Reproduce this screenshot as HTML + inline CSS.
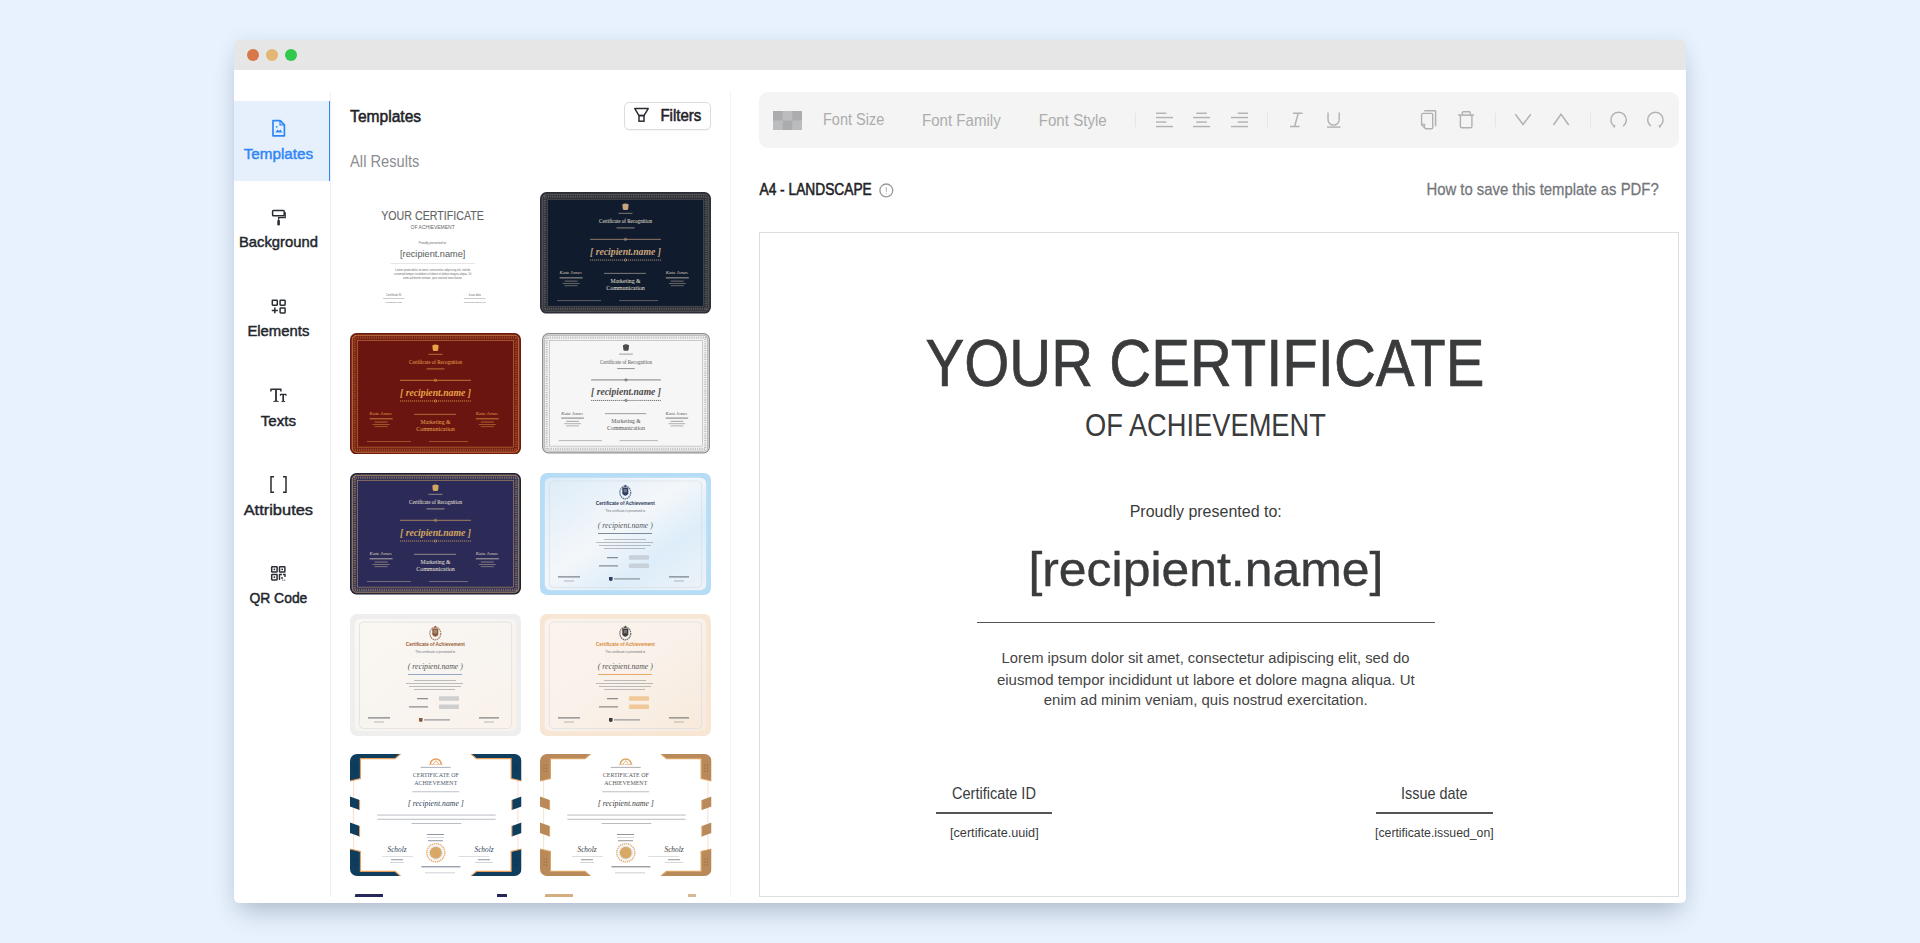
<!DOCTYPE html>
<html><head><meta charset="utf-8">
<style>
*{box-sizing:border-box;margin:0;padding:0}
html,body{width:1920px;height:943px;overflow:hidden;background:#e8f2fe;font-family:"Liberation Sans",sans-serif}
.abs{position:absolute}
#win{position:absolute;left:234px;top:40px;width:1452px;height:863px;border-radius:5px;background:#fff;overflow:hidden;box-shadow:0 14px 24px -6px rgba(70,80,105,0.32),0 0 18px rgba(80,100,130,0.08)}
#tb{position:absolute;left:0;top:0;width:100%;height:30px;background:#e6e6e6}
.dot{position:absolute;top:9.4px;width:12px;height:12px;border-radius:50%}
.t{position:absolute;white-space:nowrap;line-height:1}
#L{position:absolute;left:0;top:0;width:1920px;height:943px}
</style></head><body>
<div id="win">
  <div id="tb">
    <div class="dot" style="left:13px;background:#d6784a"></div>
    <div class="dot" style="left:32px;background:#e3b673"></div>
    <div class="dot" style="left:51px;background:#30c94b"></div>
  </div>
</div>
<div id="L">
<div class="abs" style="left:234px;top:101px;width:96px;height:80px;background:#e6f0fc;"></div>
<div class="abs" style="left:328.8px;top:101px;width:2.5px;height:80px;background:#2f86f6;"></div>
<div class="abs" style="left:330px;top:92px;width:1px;height:805px;background:#efefef;"></div>
<div class="abs" style="left:730px;top:92px;width:1px;height:805px;background:#f3f3f3;"></div>
<div class="t" style="left:243.65px;top:145.69px;font-size:15.25px;color:#2f86f6;transform:scaleY(1.010);transform-origin:0 12.91px;-webkit-text-stroke:0.45px #2f86f6;">Templates</div>
<div class="t" style="left:238.90px;top:235.27px;font-size:14.80px;color:#23262c;transform:scaleY(1.041);transform-origin:0 12.53px;-webkit-text-stroke:0.45px #23262c;">Background</div>
<div class="t" style="left:247.40px;top:324.01px;font-size:14.87px;color:#23262c;transform:scaleY(1.036);transform-origin:0 12.59px;-webkit-text-stroke:0.45px #23262c;">Elements</div>
<div class="t" style="left:260.75px;top:412.99px;font-size:15.12px;color:#23262c;transform:scaleY(1.019);transform-origin:0 12.81px;-webkit-text-stroke:0.45px #23262c;">Texts</div>
<div class="t" style="left:243.65px;top:500.77px;font-size:16.45px;color:#23262c;transform:scaleY(0.936);transform-origin:0 13.93px;-webkit-text-stroke:0.45px #23262c;">Attributes</div>
<div class="t" style="left:249.40px;top:591.82px;font-size:13.91px;color:#23262c;transform:scaleY(1.107);transform-origin:0 11.78px;-webkit-text-stroke:0.45px #23262c;">QR Code</div>
<svg class="abs" style="left:270px;top:118px" width="17" height="20" viewBox="0 0 17 20">
<path d="M3 2.6 H10.2 L14.4 6.8 V17.8 H3 Z" fill="none" stroke="#2f86f6" stroke-width="1.7" stroke-linejoin="round"/>
<path d="M10 2.6 V6.9 H14.4" fill="none" stroke="#2f86f6" stroke-width="1.2"/>
<path d="M5.2 14.6 L7.6 11.6 L9 13 L10.4 11.6 L12.4 14.6 Z" fill="#2f86f6"/>
<circle cx="6.8" cy="8.8" r="0.9" fill="#2f86f6"/>
</svg><svg class="abs" style="left:270px;top:208px" width="17" height="20" viewBox="0 0 17 20">
<rect x="2.6" y="2.5" width="11.6" height="5.2" rx="0.8" fill="none" stroke="#2a2d33" stroke-width="1.5"/>
<path d="M14.2 4.8 H15.2 V9.6 H8.6 V11.8" fill="none" stroke="#2a2d33" stroke-width="1.3"/>
<rect x="7.3" y="11.8" width="2.6" height="5.6" rx="1.2" fill="#2a2d33"/>
</svg><svg class="abs" style="left:270px;top:297px" width="17" height="19" viewBox="0 0 17 19">
<rect x="2.3" y="3.2" width="5" height="5" rx="0.6" fill="none" stroke="#2a2d33" stroke-width="1.5"/>
<rect x="10.1" y="3.2" width="5" height="5" rx="0.6" fill="none" stroke="#2a2d33" stroke-width="1.5"/>
<rect x="10.1" y="10.9" width="5" height="5" rx="0.6" fill="none" stroke="#2a2d33" stroke-width="1.5"/>
<path d="M4.8 10.4 V16.3 M1.8 13.4 H7.8" stroke="#2a2d33" stroke-width="1.5"/>
</svg><svg class="abs" style="left:266px;top:384px" width="26" height="22" viewBox="0 0 26 22">
<path d="M4.9 7.5 V5.2 H14.9 V7.5" fill="none" stroke="#2a2d33" stroke-width="1.5" stroke-linejoin="round"/>
<path d="M10 5 V17.6" stroke="#2a2d33" stroke-width="1.8"/>
<path d="M7.5 17.7 Q10 16.4 12.5 17.7" fill="none" stroke="#2a2d33" stroke-width="1.1"/>
<path d="M14.5 11.8 V10.4 H19.9 V11.8" fill="none" stroke="#2a2d33" stroke-width="1.3" stroke-linejoin="round"/>
<path d="M17.2 10.3 V17.6" stroke="#2a2d33" stroke-width="1.7"/>
<path d="M15.4 17.7 Q17.2 16.6 19 17.7" fill="none" stroke="#2a2d33" stroke-width="1"/>
</svg><svg class="abs" style="left:269px;top:475px" width="19" height="19" viewBox="0 0 19 19">
<path d="M5 1.8 H2 V17.2 H5 M14 1.8 H17 V17.2 H14" fill="none" stroke="#2a2d33" stroke-width="1.5"/>
</svg><svg class="abs" style="left:270px;top:565px" width="17" height="17" viewBox="0 0 17 17">
<rect x="1.7" y="1.7" width="5.4" height="5.4" rx="0.6" fill="none" stroke="#2a2d33" stroke-width="1.5"/>
<rect x="9.5" y="1.7" width="5.4" height="5.4" rx="0.6" fill="none" stroke="#2a2d33" stroke-width="1.5"/>
<rect x="1.7" y="9.5" width="5.4" height="5.4" rx="0.6" fill="none" stroke="#2a2d33" stroke-width="1.5"/>
<rect x="3.6" y="3.6" width="1.6" height="1.6" fill="#2a2d33"/><rect x="11.4" y="3.6" width="1.6" height="1.6" fill="#2a2d33"/><rect x="3.6" y="11.4" width="1.6" height="1.6" fill="#2a2d33"/>
<path d="M9.5 15 V9.5 H12 M13 9.5 H15 V12 M12 12 V14" fill="none" stroke="#2a2d33" stroke-width="1.4"/>
<rect x="12.3" y="14.6" width="1" height="1" fill="#2a2d33"/><rect x="14.2" y="14.6" width="1" height="1" fill="#2a2d33"/>
</svg><div class="t" style="left:350.10px;top:109.21px;font-size:15.58px;color:#1f2227;transform:scaleY(1.064);transform-origin:0 13.19px;-webkit-text-stroke:0.5px #1f2227;">Templates</div>
<div class="t" style="left:350.10px;top:154.58px;font-size:14.67px;color:#8b8d91;transform:scaleY(1.110);transform-origin:0 12.42px;">All Results</div>
<div class="abs" style="left:624px;top:102px;width:87px;height:28px;border:1.5px solid #dcdcdc;border-radius:5px;background:#fff;box-shadow:0 1px 1px rgba(0,0,0,0.04)"></div>
<svg class="abs" style="left:633px;top:107px" width="17" height="16" viewBox="0 0 17 16">
<path d="M1.8 1.6 H15.2 L11 8.6 H6 Z" fill="none" stroke="#2a2d33" stroke-width="1.5" stroke-linejoin="round"/>
<rect x="6" y="8.6" width="5" height="5.6" fill="none" stroke="#2a2d33" stroke-width="1.5"/>
</svg><div class="t" style="left:660.40px;top:107.95px;font-size:15.06px;color:#1f2227;transform:scaleY(1.100);transform-origin:0 12.75px;-webkit-text-stroke:0.5px #1f2227;">Filters</div>
<div class="abs" style="left:759px;top:92px;width:920px;height:56px;border-radius:9px;background:#f4f4f4"></div>
<svg class="abs" style="left:773px;top:111px" width="29" height="19" viewBox="0 0 29 19">
<rect width="29" height="19" fill="#bbbcbe"/>
<rect x="0" y="0" width="9.7" height="9.5" fill="#acacae"/><rect x="19.3" y="0" width="9.7" height="9.5" fill="#acacae"/><rect x="9.7" y="9.5" width="9.6" height="9.5" fill="#acacae"/>
</svg><div class="t" style="left:823.00px;top:113.47px;font-size:14.50px;color:#acacac;transform:scaleY(1.163);transform-origin:0 12.28px;">Font Size</div>
<div class="t" style="left:922.00px;top:112.98px;font-size:15.08px;color:#acacac;transform:scaleY(1.118);transform-origin:0 12.77px;">Font Family</div>
<div class="t" style="left:1038.75px;top:112.96px;font-size:15.10px;color:#acacac;transform:scaleY(1.116);transform-origin:0 12.79px;">Font Style</div>
<div class="abs" style="left:1135px;top:112.5px;width:1px;height:14px;background:#e6e6e6;"></div>
<div class="abs" style="left:1267px;top:112.5px;width:1px;height:14px;background:#e6e6e6;"></div>
<div class="abs" style="left:1494.5px;top:112.5px;width:1px;height:14px;background:#e6e6e6;"></div>
<div class="abs" style="left:1589.5px;top:112.5px;width:1px;height:14px;background:#e6e6e6;"></div>
<svg class="abs" style="left:1155px;top:108px" width="20" height="24" viewBox="0 0 20 24"><rect x="1.00" y="4.55" width="10.4" height="1.4" fill="#b1b1b1"/><rect x="1.00" y="8.85" width="17" height="1.4" fill="#b1b1b1"/><rect x="1.00" y="13.35" width="10.4" height="1.4" fill="#b1b1b1"/><rect x="1.00" y="17.85" width="17" height="1.4" fill="#b1b1b1"/></svg>
<svg class="abs" style="left:1192px;top:108px" width="20" height="24" viewBox="0 0 20 24"><rect x="4.30" y="4.55" width="10.4" height="1.4" fill="#b1b1b1"/><rect x="1.00" y="8.85" width="17" height="1.4" fill="#b1b1b1"/><rect x="4.30" y="13.35" width="10.4" height="1.4" fill="#b1b1b1"/><rect x="1.00" y="17.85" width="17" height="1.4" fill="#b1b1b1"/></svg>
<svg class="abs" style="left:1230px;top:108px" width="20" height="24" viewBox="0 0 20 24"><rect x="7.60" y="4.55" width="10.4" height="1.4" fill="#b1b1b1"/><rect x="1.00" y="8.85" width="17" height="1.4" fill="#b1b1b1"/><rect x="7.60" y="13.35" width="10.4" height="1.4" fill="#b1b1b1"/><rect x="1.00" y="17.85" width="17" height="1.4" fill="#b1b1b1"/></svg>
<svg class="abs" style="left:1286px;top:108px" width="22" height="24" viewBox="0 0 22 24">
<path d="M7 5.2 H16.5 M4 18.5 H13.5 M12.3 5.2 L8.6 18.5" stroke="#b1b1b1" stroke-width="1.4" fill="none"/>
</svg><svg class="abs" style="left:1324px;top:108px" width="20" height="24" viewBox="0 0 20 24">
<path d="M4 4.6 V11.5 A5.6 5.6 0 0 0 15.2 11.5 V4.6" stroke="#b1b1b1" stroke-width="1.4" fill="none"/>
<rect x="3" y="18.4" width="13.5" height="1.4" fill="#b1b1b1"/>
</svg><svg class="abs" style="left:1418px;top:108px" width="22" height="24" viewBox="0 0 22 24">
<path d="M6.2 2.8 H16.9 Q17.6 2.8 17.6 3.5 V18.3" stroke="#b1b1b1" stroke-width="1.5" fill="none"/>
<path d="M4.9 5.4 H13.6 Q14.7 5.4 14.7 6.5 V19.7 Q14.7 20.8 13.6 20.8 H7.6 L3.6 16.8 V6.7 Q3.6 5.4 4.9 5.4 Z" stroke="#b1b1b1" stroke-width="1.4" fill="none" stroke-linejoin="round"/>
<path d="M3.8 16.4 H6.6 V19.8" stroke="#b1b1b1" stroke-width="1.1" fill="none"/>
</svg><svg class="abs" style="left:1456px;top:108px" width="20" height="24" viewBox="0 0 20 24">
<path d="M2.2 7.1 H17.9" stroke="#b1b1b1" stroke-width="1.6" fill="none"/>
<path d="M6.3 7.1 V5 Q6.3 3.8 7.5 3.8 H13.1 Q14.3 3.8 14.3 5 V7.1" stroke="#b1b1b1" stroke-width="1.4" fill="none"/>
<path d="M4.4 7.2 V18.4 Q4.4 19.7 5.7 19.7 H14.6 Q15.9 19.7 15.9 18.4 V7.2" stroke="#b1b1b1" stroke-width="1.4" fill="none"/>
</svg><svg class="abs" style="left:1513px;top:108px" width="20" height="24" viewBox="0 0 20 24">
<path d="M2.4 6.3 L10 16.4 L17.8 6.3" stroke="#b1b1b1" stroke-width="1.5" fill="none"/>
</svg><svg class="abs" style="left:1551px;top:108px" width="20" height="24" viewBox="0 0 20 24">
<path d="M2.4 17 L10 6.3 L17.8 17" stroke="#b1b1b1" stroke-width="1.5" fill="none"/>
</svg><svg class="abs" style="left:1608px;top:108px" width="20" height="24" viewBox="0 0 20 24">
<path d="M6.2 18.2 A7.7 7.7 0 1 1 15.2 18.1" stroke="#b1b1b1" stroke-width="1.45" fill="none"/>
<path d="M4.6 17.6 L7.6 17.3 L6.3 20.2 Z" fill="#b1b1b1"/>
</svg><svg class="abs" style="left:1646px;top:108px" width="20" height="24" viewBox="0 0 20 24">
<path d="M13.8 18.2 A7.7 7.7 0 1 0 4.8 18.1" stroke="#b1b1b1" stroke-width="1.45" fill="none"/>
<path d="M15.4 17.6 L12.4 17.3 L13.7 20.2 Z" fill="#b1b1b1"/>
</svg><div class="t" style="left:759.50px;top:183.87px;font-size:13.74px;color:#1f2227;transform:scaleY(1.164);transform-origin:0 11.63px;-webkit-text-stroke:0.5px #1f2227;">A4 - LANDSCAPE</div>
<svg class="abs" style="left:878px;top:182px" width="17" height="17" viewBox="0 0 17 17">
<circle cx="8.3" cy="8.4" r="6.4" fill="none" stroke="#9a9a9a" stroke-width="1.3"/>
<path d="M8.3 5 V10.2 M8.3 11.3 V12.3" stroke="#b5b5b5" stroke-width="1"/>
</svg><div class="t" style="left:1426.40px;top:183.00px;font-size:14.89px;color:#74767a;transform:scaleY(1.113);transform-origin:0 12.60px;-webkit-text-stroke:0.25px #74767a;">How to save this template as PDF?</div>
<div class="abs" style="left:759px;top:232px;width:920px;height:665px;border:1.3px solid #dedede;background:#fff"></div>
<div class="abs" style="left:0;top:0"><div class="t" style="left:925.50px;top:337.45px;font-size:58.04px;color:#3a3b3d;transform:scaleY(1.159);transform-origin:0 49.15px;-webkit-text-stroke:0.6px #3a3b3d;">YOUR CERTIFICATE</div>
<div class="t" style="left:1085.00px;top:412.90px;font-size:27.28px;color:#3a3b3d;transform:scaleY(1.172);transform-origin:0 23.10px;">OF ACHIEVEMENT</div>
<div class="t" style="left:1129.70px;top:504.44px;font-size:16.01px;color:#3a3b3d;transform:scaleY(1.035);transform-origin:0 13.56px;">Proudly presented to:</div>
<div class="t" style="left:1028.40px;top:544.65px;font-size:49.90px;color:#3a3b3d;transform:scaleY(0.950);transform-origin:0 42.25px;-webkit-text-stroke:0.4px #3a3b3d;">[recipient.name]</div>
<div class="abs" style="left:976.6px;top:622px;width:458.4px;height:1.3px;background:#555;"></div>
<div class="t" style="left:1001.60px;top:651.23px;font-size:14.78px;color:#444;transform:scaleY(1.003);transform-origin:0 12.52px;">Lorem ipsum dolor sit amet, consectetur adipiscing elit, sed do</div>
<div class="t" style="left:996.95px;top:671.99px;font-size:15.01px;color:#444;transform:scaleY(0.988);transform-origin:0 12.71px;">eiusmod tempor incididunt ut labore et dolore magna aliqua. Ut</div>
<div class="t" style="left:1043.80px;top:692.94px;font-size:14.95px;color:#444;transform:scaleY(0.992);transform-origin:0 12.66px;">enim ad minim veniam, quis nostrud exercitation.</div>
<div class="t" style="left:952.00px;top:787.29px;font-size:14.53px;color:#3a3b3d;transform:scaleY(1.100);transform-origin:0 12.31px;">Certificate ID</div>
<div class="abs" style="left:935.8px;top:812px;width:116.7px;height:1.6px;background:#555;"></div>
<div class="t" style="left:950.02px;top:826.87px;font-size:12.67px;color:#3a3b3d;transform:scaleY(0.998);transform-origin:0 10.73px;">[certificate.uuid]</div>
<div class="t" style="left:1401.00px;top:787.40px;font-size:14.41px;color:#3a3b3d;transform:scaleY(1.109);transform-origin:0 12.20px;">Issue date</div>
<div class="abs" style="left:1375.8px;top:812px;width:117.1px;height:1.6px;background:#555;"></div>
<div class="t" style="left:1375.03px;top:827.20px;font-size:12.28px;color:#3a3b3d;transform:scaleY(1.030);transform-origin:0 10.40px;">[certificate.issued_on]</div>
</div>
<div class="abs" style="left:0;top:0;width:1920px;height:943px;transform-origin:0 0;transform:translate(210.844px,148.812px) scale(0.184);opacity:0.8"><div class="t" style="left:925.50px;top:337.45px;font-size:58.04px;color:#3a3b3d;transform:scaleY(1.159);transform-origin:0 49.15px;-webkit-text-stroke:0.6px #3a3b3d;">YOUR CERTIFICATE</div>
<div class="t" style="left:1085.00px;top:412.90px;font-size:27.28px;color:#3a3b3d;transform:scaleY(1.172);transform-origin:0 23.10px;">OF ACHIEVEMENT</div>
<div class="t" style="left:1129.70px;top:504.44px;font-size:16.01px;color:#3a3b3d;transform:scaleY(1.035);transform-origin:0 13.56px;">Proudly presented to:</div>
<div class="t" style="left:1028.40px;top:544.65px;font-size:49.90px;color:#3a3b3d;transform:scaleY(0.950);transform-origin:0 42.25px;-webkit-text-stroke:0.4px #3a3b3d;">[recipient.name]</div>
<div class="abs" style="left:976.6px;top:622px;width:458.4px;height:1.3px;background:#555;"></div>
<div class="t" style="left:1001.60px;top:651.23px;font-size:14.78px;color:#444;transform:scaleY(1.003);transform-origin:0 12.52px;">Lorem ipsum dolor sit amet, consectetur adipiscing elit, sed do</div>
<div class="t" style="left:996.95px;top:671.99px;font-size:15.01px;color:#444;transform:scaleY(0.988);transform-origin:0 12.71px;">eiusmod tempor incididunt ut labore et dolore magna aliqua. Ut</div>
<div class="t" style="left:1043.80px;top:692.94px;font-size:14.95px;color:#444;transform:scaleY(0.992);transform-origin:0 12.66px;">enim ad minim veniam, quis nostrud exercitation.</div>
<div class="t" style="left:952.00px;top:787.29px;font-size:14.53px;color:#3a3b3d;transform:scaleY(1.100);transform-origin:0 12.31px;">Certificate ID</div>
<div class="abs" style="left:935.8px;top:812px;width:116.7px;height:1.6px;background:#555;"></div>
<div class="t" style="left:950.02px;top:826.87px;font-size:12.67px;color:#3a3b3d;transform:scaleY(0.998);transform-origin:0 10.73px;">[certificate.uuid]</div>
<div class="t" style="left:1401.00px;top:787.40px;font-size:14.41px;color:#3a3b3d;transform:scaleY(1.109);transform-origin:0 12.20px;">Issue date</div>
<div class="abs" style="left:1375.8px;top:812px;width:117.1px;height:1.6px;background:#555;"></div>
<div class="t" style="left:1375.03px;top:827.20px;font-size:12.28px;color:#3a3b3d;transform:scaleY(1.030);transform-origin:0 10.40px;">[certificate.issued_on]</div>
</div>
<svg class="abs" style="left:540.2px;top:192.1px" width="171" height="121.6" viewBox="0 0 171 121.6"><rect x="0" y="0" width="171" height="121.6" rx="6.5" fill="#2a2d35"/><rect x="1.3" y="1.3" width="168.4" height="119.0" rx="5.2" fill="#303238"/><rect x="2.3" y="2.3" width="166.4" height="117.0" rx="4.2" fill="none" stroke="#5f6064" stroke-width="0.9" opacity="0.85"/><rect x="4.7" y="4.7" width="161.6" height="112.19999999999999" fill="none" stroke="#77777a" stroke-width="2.2" stroke-dasharray="0.7 1.1" opacity="0.75"/><rect x="7.4" y="7.4" width="156.2" height="106.8" fill="#111b2e" stroke="#5f6064" stroke-width="0.5"/><g transform="scale(1.0000,1.0008)"><path d="M82.3 12.6 Q85.5 10.2 88.7 12.6 L88.1 17.4 Q85.5 18.6 82.9 17.4 Z" fill="#c9a57c"/><rect x="78.5" y="20.8" width="14" height="1" fill="#a9a295" opacity="0.7"/><text x="85.5" y="31.4" font-family="Liberation Serif" font-size="5.6" fill="#e6e1d8" text-anchor="middle" textLength="53" lengthAdjust="spacingAndGlyphs">Certificate of Recognition</text><rect x="76.5" y="35.4" width="18" height="1" fill="#a9a295" opacity="0.8"/><path d="M50 47.3 H121" stroke="#c9a57c" stroke-width="0.7"/><circle cx="85.5" cy="47.3" r="1.2" fill="none" stroke="#c9a57c" stroke-width="0.6"/><text x="85.5" y="62.5" font-family="Liberation Serif" font-style="italic" font-weight="bold" font-size="11" fill="#c9a57c" text-anchor="middle" textLength="71" lengthAdjust="spacingAndGlyphs">[ recipient.name ]</text><path d="M50 68 H121" stroke="#c9a57c" stroke-width="0.8" stroke-dasharray="1.2 0.8"/><circle cx="85.5" cy="68" r="1.2" fill="none" stroke="#c9a57c" stroke-width="0.6"/><text x="30.6" y="82.4" font-family="Liberation Serif" font-style="italic" font-size="5" fill="#d9cdb8" text-anchor="middle" textLength="22" lengthAdjust="spacingAndGlyphs">Kate Jones</text><rect x="19.6" y="85.3" width="23" height="1" fill="#d9cdb8" opacity="0.75"/><rect x="24.6" y="88.6" width="13" height="0.9" fill="#a9a295" opacity="0.7"/><rect x="22.6" y="91" width="17" height="0.9" fill="#a9a295" opacity="0.6"/><rect x="24.6" y="93.2" width="13" height="0.9" fill="#a9a295" opacity="0.6"/><text x="136.8" y="82.4" font-family="Liberation Serif" font-style="italic" font-size="5" fill="#d9cdb8" text-anchor="middle" textLength="22" lengthAdjust="spacingAndGlyphs">Kate Jones</text><rect x="125.8" y="85.3" width="23" height="1" fill="#d9cdb8" opacity="0.75"/><rect x="130.8" y="88.6" width="13" height="0.9" fill="#a9a295" opacity="0.7"/><rect x="128.8" y="91" width="17" height="0.9" fill="#a9a295" opacity="0.6"/><rect x="130.8" y="93.2" width="13" height="0.9" fill="#a9a295" opacity="0.6"/><rect x="64" y="80.8" width="42" height="1" fill="#a9a295" opacity="0.7"/><text x="85.5" y="90.6" font-family="Liberation Serif" font-size="6.4" fill="#e6e1d8" text-anchor="middle" textLength="30" lengthAdjust="spacingAndGlyphs">Marketing &amp;</text><text x="85.5" y="98" font-family="Liberation Serif" font-size="6.4" fill="#e6e1d8" text-anchor="middle" textLength="38.6" lengthAdjust="spacingAndGlyphs">Communication</text><rect x="17" y="108" width="44" height="1" fill="#a9a295" opacity="0.5"/><rect x="79" y="108" width="39" height="1" fill="#a9a295" opacity="0.5"/></g></svg>
<svg class="abs" style="left:350px;top:332.5px" width="171" height="121.5" viewBox="0 0 171 121.5"><rect x="0" y="0" width="171" height="121.5" rx="6.5" fill="#6b1a12"/><rect x="1.3" y="1.3" width="168.4" height="118.9" rx="5.2" fill="#762214"/><rect x="2.3" y="2.3" width="166.4" height="116.9" rx="4.2" fill="none" stroke="#d88a48" stroke-width="0.9" opacity="0.85"/><rect x="4.7" y="4.7" width="161.6" height="112.1" fill="none" stroke="#b8683a" stroke-width="2.2" stroke-dasharray="0.7 1.1" opacity="0.75"/><rect x="7.4" y="7.4" width="156.2" height="106.7" fill="#6a150f" stroke="#d88a48" stroke-width="0.5"/><g transform="scale(1.0000,1.0000)"><path d="M82.3 12.6 Q85.5 10.2 88.7 12.6 L88.1 17.4 Q85.5 18.6 82.9 17.4 Z" fill="#e8a149"/><rect x="78.5" y="20.8" width="14" height="1" fill="#d58b43" opacity="0.7"/><text x="85.5" y="31.4" font-family="Liberation Serif" font-size="5.6" fill="#e9a452" text-anchor="middle" textLength="53" lengthAdjust="spacingAndGlyphs">Certificate of Recognition</text><rect x="76.5" y="35.4" width="18" height="1" fill="#d58b43" opacity="0.8"/><path d="M50 47.3 H121" stroke="#e8a149" stroke-width="0.7"/><circle cx="85.5" cy="47.3" r="1.2" fill="none" stroke="#e8a149" stroke-width="0.6"/><text x="85.5" y="62.5" font-family="Liberation Serif" font-style="italic" font-weight="bold" font-size="11" fill="#e8a149" text-anchor="middle" textLength="71" lengthAdjust="spacingAndGlyphs">[ recipient.name ]</text><path d="M50 68 H121" stroke="#e8a149" stroke-width="0.8" stroke-dasharray="1.2 0.8"/><circle cx="85.5" cy="68" r="1.2" fill="none" stroke="#e8a149" stroke-width="0.6"/><text x="30.6" y="82.4" font-family="Liberation Serif" font-style="italic" font-size="5" fill="#e49c48" text-anchor="middle" textLength="22" lengthAdjust="spacingAndGlyphs">Kate Jones</text><rect x="19.6" y="85.3" width="23" height="1" fill="#e49c48" opacity="0.75"/><rect x="24.6" y="88.6" width="13" height="0.9" fill="#d58b43" opacity="0.7"/><rect x="22.6" y="91" width="17" height="0.9" fill="#d58b43" opacity="0.6"/><rect x="24.6" y="93.2" width="13" height="0.9" fill="#d58b43" opacity="0.6"/><text x="136.8" y="82.4" font-family="Liberation Serif" font-style="italic" font-size="5" fill="#e49c48" text-anchor="middle" textLength="22" lengthAdjust="spacingAndGlyphs">Kate Jones</text><rect x="125.8" y="85.3" width="23" height="1" fill="#e49c48" opacity="0.75"/><rect x="130.8" y="88.6" width="13" height="0.9" fill="#d58b43" opacity="0.7"/><rect x="128.8" y="91" width="17" height="0.9" fill="#d58b43" opacity="0.6"/><rect x="130.8" y="93.2" width="13" height="0.9" fill="#d58b43" opacity="0.6"/><rect x="64" y="80.8" width="42" height="1" fill="#d58b43" opacity="0.7"/><text x="85.5" y="90.6" font-family="Liberation Serif" font-size="6.4" fill="#e9a452" text-anchor="middle" textLength="30" lengthAdjust="spacingAndGlyphs">Marketing &amp;</text><text x="85.5" y="98" font-family="Liberation Serif" font-size="6.4" fill="#e9a452" text-anchor="middle" textLength="38.6" lengthAdjust="spacingAndGlyphs">Communication</text><rect x="17" y="108" width="44" height="1" fill="#d58b43" opacity="0.5"/><rect x="79" y="108" width="39" height="1" fill="#d58b43" opacity="0.5"/></g></svg>
<svg class="abs" style="left:542px;top:333.2px" width="168" height="120.5" viewBox="0 0 168 120.5"><rect x="0" y="0" width="168" height="120.5" rx="6.5" fill="#8f8f8f"/><rect x="1.3" y="1.3" width="165.4" height="117.9" rx="5.2" fill="#f2f2f2"/><rect x="2.3" y="2.3" width="163.4" height="115.9" rx="4.2" fill="none" stroke="#a0a0a0" stroke-width="0.9" opacity="0.85"/><rect x="4.7" y="4.7" width="158.6" height="111.1" fill="none" stroke="#9b9b9b" stroke-width="2.2" stroke-dasharray="0.7 1.1" opacity="0.75"/><rect x="7.4" y="7.4" width="153.2" height="105.7" fill="#f6f6f6" stroke="#a0a0a0" stroke-width="0.5"/><g transform="scale(0.9825,0.9918)"><path d="M82.3 12.6 Q85.5 10.2 88.7 12.6 L88.1 17.4 Q85.5 18.6 82.9 17.4 Z" fill="#4a4a4a"/><rect x="78.5" y="20.8" width="14" height="1" fill="#777777" opacity="0.7"/><text x="85.5" y="31.4" font-family="Liberation Serif" font-size="5.6" fill="#555555" text-anchor="middle" textLength="53" lengthAdjust="spacingAndGlyphs">Certificate of Recognition</text><rect x="76.5" y="35.4" width="18" height="1" fill="#777777" opacity="0.8"/><path d="M50 47.3 H121" stroke="#4a4a4a" stroke-width="0.7"/><circle cx="85.5" cy="47.3" r="1.2" fill="none" stroke="#4a4a4a" stroke-width="0.6"/><text x="85.5" y="62.5" font-family="Liberation Serif" font-style="italic" font-weight="bold" font-size="11" fill="#4a4a4a" text-anchor="middle" textLength="71" lengthAdjust="spacingAndGlyphs">[ recipient.name ]</text><path d="M50 68 H121" stroke="#4a4a4a" stroke-width="0.8" stroke-dasharray="1.2 0.8"/><circle cx="85.5" cy="68" r="1.2" fill="none" stroke="#4a4a4a" stroke-width="0.6"/><text x="30.6" y="82.4" font-family="Liberation Serif" font-style="italic" font-size="5" fill="#5a5a5a" text-anchor="middle" textLength="22" lengthAdjust="spacingAndGlyphs">Kate Jones</text><rect x="19.6" y="85.3" width="23" height="1" fill="#5a5a5a" opacity="0.75"/><rect x="24.6" y="88.6" width="13" height="0.9" fill="#777777" opacity="0.7"/><rect x="22.6" y="91" width="17" height="0.9" fill="#777777" opacity="0.6"/><rect x="24.6" y="93.2" width="13" height="0.9" fill="#777777" opacity="0.6"/><text x="136.8" y="82.4" font-family="Liberation Serif" font-style="italic" font-size="5" fill="#5a5a5a" text-anchor="middle" textLength="22" lengthAdjust="spacingAndGlyphs">Kate Jones</text><rect x="125.8" y="85.3" width="23" height="1" fill="#5a5a5a" opacity="0.75"/><rect x="130.8" y="88.6" width="13" height="0.9" fill="#777777" opacity="0.7"/><rect x="128.8" y="91" width="17" height="0.9" fill="#777777" opacity="0.6"/><rect x="130.8" y="93.2" width="13" height="0.9" fill="#777777" opacity="0.6"/><rect x="64" y="80.8" width="42" height="1" fill="#777777" opacity="0.7"/><text x="85.5" y="90.6" font-family="Liberation Serif" font-size="6.4" fill="#555555" text-anchor="middle" textLength="30" lengthAdjust="spacingAndGlyphs">Marketing &amp;</text><text x="85.5" y="98" font-family="Liberation Serif" font-size="6.4" fill="#555555" text-anchor="middle" textLength="38.6" lengthAdjust="spacingAndGlyphs">Communication</text><rect x="17" y="108" width="44" height="1" fill="#777777" opacity="0.5"/><rect x="79" y="108" width="39" height="1" fill="#777777" opacity="0.5"/></g></svg>
<svg class="abs" style="left:350px;top:473px" width="171" height="121.5" viewBox="0 0 171 121.5"><rect x="0" y="0" width="171" height="121.5" rx="6.5" fill="#1f2130"/><rect x="1.3" y="1.3" width="168.4" height="118.9" rx="5.2" fill="#35355a"/><rect x="2.3" y="2.3" width="166.4" height="116.9" rx="4.2" fill="none" stroke="#c9a063" stroke-width="0.9" opacity="0.85"/><rect x="4.7" y="4.7" width="161.6" height="112.1" fill="none" stroke="#c09a64" stroke-width="2.2" stroke-dasharray="0.7 1.1" opacity="0.75"/><rect x="7.4" y="7.4" width="156.2" height="106.7" fill="#2c2b58" stroke="#c9a063" stroke-width="0.5"/><g transform="scale(1.0000,1.0000)"><path d="M82.3 12.6 Q85.5 10.2 88.7 12.6 L88.1 17.4 Q85.5 18.6 82.9 17.4 Z" fill="#d3a561"/><rect x="78.5" y="20.8" width="14" height="1" fill="#bcae98" opacity="0.7"/><text x="85.5" y="31.4" font-family="Liberation Serif" font-size="5.6" fill="#ece6da" text-anchor="middle" textLength="53" lengthAdjust="spacingAndGlyphs">Certificate of Recognition</text><rect x="76.5" y="35.4" width="18" height="1" fill="#bcae98" opacity="0.8"/><path d="M50 47.3 H121" stroke="#d3a561" stroke-width="0.7"/><circle cx="85.5" cy="47.3" r="1.2" fill="none" stroke="#d3a561" stroke-width="0.6"/><text x="85.5" y="62.5" font-family="Liberation Serif" font-style="italic" font-weight="bold" font-size="11" fill="#d3a561" text-anchor="middle" textLength="71" lengthAdjust="spacingAndGlyphs">[ recipient.name ]</text><path d="M50 68 H121" stroke="#d3a561" stroke-width="0.8" stroke-dasharray="1.2 0.8"/><circle cx="85.5" cy="68" r="1.2" fill="none" stroke="#d3a561" stroke-width="0.6"/><text x="30.6" y="82.4" font-family="Liberation Serif" font-style="italic" font-size="5" fill="#ddd2bc" text-anchor="middle" textLength="22" lengthAdjust="spacingAndGlyphs">Kate Jones</text><rect x="19.6" y="85.3" width="23" height="1" fill="#ddd2bc" opacity="0.75"/><rect x="24.6" y="88.6" width="13" height="0.9" fill="#bcae98" opacity="0.7"/><rect x="22.6" y="91" width="17" height="0.9" fill="#bcae98" opacity="0.6"/><rect x="24.6" y="93.2" width="13" height="0.9" fill="#bcae98" opacity="0.6"/><text x="136.8" y="82.4" font-family="Liberation Serif" font-style="italic" font-size="5" fill="#ddd2bc" text-anchor="middle" textLength="22" lengthAdjust="spacingAndGlyphs">Kate Jones</text><rect x="125.8" y="85.3" width="23" height="1" fill="#ddd2bc" opacity="0.75"/><rect x="130.8" y="88.6" width="13" height="0.9" fill="#bcae98" opacity="0.7"/><rect x="128.8" y="91" width="17" height="0.9" fill="#bcae98" opacity="0.6"/><rect x="130.8" y="93.2" width="13" height="0.9" fill="#bcae98" opacity="0.6"/><rect x="64" y="80.8" width="42" height="1" fill="#bcae98" opacity="0.7"/><text x="85.5" y="90.6" font-family="Liberation Serif" font-size="6.4" fill="#ece6da" text-anchor="middle" textLength="30" lengthAdjust="spacingAndGlyphs">Marketing &amp;</text><text x="85.5" y="98" font-family="Liberation Serif" font-size="6.4" fill="#ece6da" text-anchor="middle" textLength="38.6" lengthAdjust="spacingAndGlyphs">Communication</text><rect x="17" y="108" width="44" height="1" fill="#bcae98" opacity="0.5"/><rect x="79" y="108" width="39" height="1" fill="#bcae98" opacity="0.5"/></g></svg>
<svg class="abs" style="left:540px;top:473px" width="171" height="122" viewBox="0 0 171 122"><defs><linearGradient id="g540473" x1="0" y1="0" x2="1" y2="1"><stop offset="0" stop-color="#dcecf8"/><stop offset="0.45" stop-color="#f4f7fa"/><stop offset="0.7" stop-color="#ddedf9"/><stop offset="1" stop-color="#eef3f8"/></linearGradient></defs><rect x="0" y="0" width="171" height="122" rx="7" fill="#b6dcf6"/><rect x="4.8" y="4.8" width="161.4" height="112.4" rx="6" fill="url(#g540473)"/><rect x="9.4" y="8" width="152.2" height="106.5" rx="4" fill="none" stroke="#d8dde3" stroke-width="0.7"/><ellipse cx="85.3" cy="19.4" rx="5.4" ry="6.4" fill="none" stroke="#2f3d63" stroke-width="1.3" stroke-dasharray="1.4 0.7" opacity="0.75"/><path d="M82.3 14.6 H88.3 V20.8 Q85.3 24.6 82.3 20.8 Z" fill="#2f3d63"/><path d="M83.7 16 H86.89999999999999 V19.4 H83.7 Z" fill="#ffffff" opacity="0.3"/><path d="M85.3 11.6 L86.7 13.8 H83.89999999999999 Z" fill="#2f3d63"/><text x="85.3" y="32" font-family="Liberation Sans" font-weight="bold" font-size="5.4" fill="#2e3a55" text-anchor="middle" textLength="59" lengthAdjust="spacingAndGlyphs">Certificate of Achievement</text><text x="85.3" y="38.6" font-family="Liberation Sans" font-size="3.2" fill="#6a6f77" text-anchor="middle" textLength="40" lengthAdjust="spacingAndGlyphs">This certificate is presented to</text><text x="85.3" y="54.5" font-family="Liberation Serif" font-style="italic" font-size="8" fill="#555a63" text-anchor="middle" textLength="55" lengthAdjust="spacingAndGlyphs">( recipient.name )</text><rect x="58" y="60" width="54" height="0.9" fill="#6f7f95"/><rect x="64" y="66" width="42" height="0.8" fill="#6e737a" opacity="0.55"/><rect x="56" y="69" width="57" height="0.8" fill="#6e737a" opacity="0.55"/><rect x="59" y="72" width="52" height="0.8" fill="#6e737a" opacity="0.55"/><rect x="64" y="75" width="41" height="0.8" fill="#6e737a" opacity="0.55"/><rect x="67" y="84.2" width="11" height="1" fill="#50555c" opacity="0.8"/><rect x="89" y="82.2" width="20" height="4.6" rx="0.8" fill="#c8d0da"/><rect x="59" y="92.4" width="19" height="1" fill="#50555c" opacity="0.8"/><rect x="89" y="90.4" width="20" height="4.6" rx="0.8" fill="#c8d0da"/><rect x="18" y="103.4" width="22" height="1" fill="#40454c" opacity="0.8"/><rect x="24" y="107.6" width="10" height="0.8" fill="#777" opacity="0.6"/><rect x="129" y="103.4" width="20" height="1" fill="#40454c" opacity="0.8"/><rect x="134" y="107.6" width="10" height="0.8" fill="#777" opacity="0.6"/><path d="M69 104 H72.6 V107 Q70.8 108.8 69 107 Z" fill="#2f3d63"/><rect x="74" y="105.4" width="26" height="1" fill="#50555c" opacity="0.7"/></svg>
<svg class="abs" style="left:350px;top:613.5px" width="171" height="122" viewBox="0 0 171 122"><defs><linearGradient id="g350613" x1="0" y1="0" x2="1" y2="1"><stop offset="0" stop-color="#fbf7f3"/><stop offset="0.5" stop-color="#f8f4f0"/><stop offset="1" stop-color="#fbf3ea"/></linearGradient></defs><rect x="0" y="0" width="171" height="122" rx="7" fill="#eeeeee"/><rect x="4.8" y="4.8" width="161.4" height="112.4" rx="6" fill="url(#g350613)"/><rect x="9.4" y="8" width="152.2" height="106.5" rx="4" fill="none" stroke="#d8dde3" stroke-width="0.7"/><ellipse cx="85.3" cy="19.4" rx="5.4" ry="6.4" fill="none" stroke="#8a5a3c" stroke-width="1.3" stroke-dasharray="1.4 0.7" opacity="0.75"/><path d="M82.3 14.6 H88.3 V20.8 Q85.3 24.6 82.3 20.8 Z" fill="#8a5a3c"/><path d="M83.7 16 H86.89999999999999 V19.4 H83.7 Z" fill="#ffffff" opacity="0.3"/><path d="M85.3 11.6 L86.7 13.8 H83.89999999999999 Z" fill="#8a5a3c"/><text x="85.3" y="32" font-family="Liberation Sans" font-weight="bold" font-size="5.4" fill="#9a5a34" text-anchor="middle" textLength="59" lengthAdjust="spacingAndGlyphs">Certificate of Achievement</text><text x="85.3" y="38.6" font-family="Liberation Sans" font-size="3.2" fill="#6a6f77" text-anchor="middle" textLength="40" lengthAdjust="spacingAndGlyphs">This certificate is presented to</text><text x="85.3" y="54.5" font-family="Liberation Serif" font-style="italic" font-size="8" fill="#555" text-anchor="middle" textLength="55" lengthAdjust="spacingAndGlyphs">( recipient.name )</text><rect x="58" y="60" width="54" height="0.9" fill="#8aa0c0"/><rect x="64" y="66" width="42" height="0.8" fill="#6e737a" opacity="0.55"/><rect x="56" y="69" width="57" height="0.8" fill="#6e737a" opacity="0.55"/><rect x="59" y="72" width="52" height="0.8" fill="#6e737a" opacity="0.55"/><rect x="64" y="75" width="41" height="0.8" fill="#6e737a" opacity="0.55"/><rect x="67" y="84.2" width="11" height="1" fill="#50555c" opacity="0.8"/><rect x="89" y="82.2" width="20" height="4.6" rx="0.8" fill="#cfcfcf"/><rect x="59" y="92.4" width="19" height="1" fill="#50555c" opacity="0.8"/><rect x="89" y="90.4" width="20" height="4.6" rx="0.8" fill="#cfcfcf"/><rect x="18" y="103.4" width="22" height="1" fill="#40454c" opacity="0.8"/><rect x="24" y="107.6" width="10" height="0.8" fill="#777" opacity="0.6"/><rect x="129" y="103.4" width="20" height="1" fill="#40454c" opacity="0.8"/><rect x="134" y="107.6" width="10" height="0.8" fill="#777" opacity="0.6"/><path d="M69 104 H72.6 V107 Q70.8 108.8 69 107 Z" fill="#8a5a3c"/><rect x="74" y="105.4" width="26" height="1" fill="#50555c" opacity="0.7"/></svg>
<svg class="abs" style="left:540px;top:613.5px" width="171" height="122" viewBox="0 0 171 122"><defs><linearGradient id="g540613" x1="0" y1="0" x2="1" y2="1"><stop offset="0" stop-color="#fbf4ed"/><stop offset="0.5" stop-color="#f9f1ea"/><stop offset="1" stop-color="#f8eadb"/></linearGradient></defs><rect x="0" y="0" width="171" height="122" rx="7" fill="#f7e6d3"/><rect x="4.8" y="4.8" width="161.4" height="112.4" rx="6" fill="url(#g540613)"/><rect x="9.4" y="8" width="152.2" height="106.5" rx="4" fill="none" stroke="#d8dde3" stroke-width="0.7"/><ellipse cx="85.3" cy="19.4" rx="5.4" ry="6.4" fill="none" stroke="#3c3c3c" stroke-width="1.3" stroke-dasharray="1.4 0.7" opacity="0.75"/><path d="M82.3 14.6 H88.3 V20.8 Q85.3 24.6 82.3 20.8 Z" fill="#3c3c3c"/><path d="M83.7 16 H86.89999999999999 V19.4 H83.7 Z" fill="#ffffff" opacity="0.3"/><path d="M85.3 11.6 L86.7 13.8 H83.89999999999999 Z" fill="#3c3c3c"/><text x="85.3" y="32" font-family="Liberation Sans" font-weight="bold" font-size="5.4" fill="#d88a3a" text-anchor="middle" textLength="59" lengthAdjust="spacingAndGlyphs">Certificate of Achievement</text><text x="85.3" y="38.6" font-family="Liberation Sans" font-size="3.2" fill="#6a6f77" text-anchor="middle" textLength="40" lengthAdjust="spacingAndGlyphs">This certificate is presented to</text><text x="85.3" y="54.5" font-family="Liberation Serif" font-style="italic" font-size="8" fill="#555" text-anchor="middle" textLength="55" lengthAdjust="spacingAndGlyphs">( recipient.name )</text><rect x="58" y="60" width="54" height="0.9" fill="#e2a25a"/><rect x="64" y="66" width="42" height="0.8" fill="#6e737a" opacity="0.55"/><rect x="56" y="69" width="57" height="0.8" fill="#6e737a" opacity="0.55"/><rect x="59" y="72" width="52" height="0.8" fill="#6e737a" opacity="0.55"/><rect x="64" y="75" width="41" height="0.8" fill="#6e737a" opacity="0.55"/><rect x="67" y="84.2" width="11" height="1" fill="#50555c" opacity="0.8"/><rect x="89" y="82.2" width="20" height="4.6" rx="0.8" fill="#f0c89a"/><rect x="59" y="92.4" width="19" height="1" fill="#50555c" opacity="0.8"/><rect x="89" y="90.4" width="20" height="4.6" rx="0.8" fill="#f0c89a"/><rect x="18" y="103.4" width="22" height="1" fill="#40454c" opacity="0.8"/><rect x="24" y="107.6" width="10" height="0.8" fill="#777" opacity="0.6"/><rect x="129" y="103.4" width="20" height="1" fill="#40454c" opacity="0.8"/><rect x="134" y="107.6" width="10" height="0.8" fill="#777" opacity="0.6"/><path d="M69 104 H72.6 V107 Q70.8 108.8 69 107 Z" fill="#3c3c3c"/><rect x="74" y="105.4" width="26" height="1" fill="#50555c" opacity="0.7"/></svg>
<svg class="abs" style="left:350px;top:753.6px" width="171.5" height="122" viewBox="0 0 171.5 122"><defs><clipPath id="c350753"><rect x="0" y="0" width="171.5" height="122" rx="7"/></clipPath></defs><g clip-path="url(#c350753)"><rect x="0" y="0" width="171.5" height="122" fill="#fff"/><path d="M3.6 25 V98 M167.9 25 V98" stroke="#e79c58" stroke-width="0.5" opacity="0.6"/><g transform=""><path d="M0 0 H50.5 L45 4.6 H10.4 V24.6 L0 27 Z" fill="#0f3d5e"/><path d="M50.5 0 L45 4.6 H10.4 V24.6 L0 27" fill="none" stroke="#e79c58" stroke-width="1.1"/><g fill="#000" opacity="0.35"><circle cx="4" cy="11" r="0.5"/><circle cx="6.5" cy="11" r="0.5"/><circle cx="4" cy="14" r="0.5"/><circle cx="6.5" cy="14" r="0.5"/><circle cx="4" cy="17" r="0.5"/><circle cx="6.5" cy="17" r="0.5"/></g></g><g transform="translate(171.5,0) scale(-1,1)"><path d="M0 0 H50.5 L45 4.6 H10.4 V24.6 L0 27 Z" fill="#0f3d5e"/><path d="M50.5 0 L45 4.6 H10.4 V24.6 L0 27" fill="none" stroke="#e79c58" stroke-width="1.1"/><g fill="#000" opacity="0.35"><circle cx="4" cy="11" r="0.5"/><circle cx="6.5" cy="11" r="0.5"/><circle cx="4" cy="14" r="0.5"/><circle cx="6.5" cy="14" r="0.5"/><circle cx="4" cy="17" r="0.5"/><circle cx="6.5" cy="17" r="0.5"/></g></g><g transform="translate(0,122) scale(1,-1)"><path d="M0 0 H50.5 L45 4.6 H10.4 V24.6 L0 27 Z" fill="#0f3d5e"/><path d="M50.5 0 L45 4.6 H10.4 V24.6 L0 27" fill="none" stroke="#e79c58" stroke-width="1.1"/><g fill="#000" opacity="0.35"><circle cx="4" cy="11" r="0.5"/><circle cx="6.5" cy="11" r="0.5"/><circle cx="4" cy="14" r="0.5"/><circle cx="6.5" cy="14" r="0.5"/><circle cx="4" cy="17" r="0.5"/><circle cx="6.5" cy="17" r="0.5"/></g></g><g transform="translate(171.5,122) scale(-1,-1)"><path d="M0 0 H50.5 L45 4.6 H10.4 V24.6 L0 27 Z" fill="#0f3d5e"/><path d="M50.5 0 L45 4.6 H10.4 V24.6 L0 27" fill="none" stroke="#e79c58" stroke-width="1.1"/><g fill="#000" opacity="0.35"><circle cx="4" cy="11" r="0.5"/><circle cx="6.5" cy="11" r="0.5"/><circle cx="4" cy="14" r="0.5"/><circle cx="6.5" cy="14" r="0.5"/><circle cx="4" cy="17" r="0.5"/><circle cx="6.5" cy="17" r="0.5"/></g></g><path d="M0 42.6 L9.6 46.1 V56 L0 52.5 Z" fill="#0f3d5e"/><path d="M9.6 46.1 V56" stroke="#e79c58" stroke-width="1"/><path d="M171.5 42.6 L161.9 46.1 V56 L171.5 52.5 Z" fill="#0f3d5e"/><path d="M161.9 46.1 V56" stroke="#e79c58" stroke-width="1"/><path d="M0 68.4 L9.6 71.9 V82.6 L0 79.1 Z" fill="#0f3d5e"/><path d="M9.6 71.9 V82.6" stroke="#e79c58" stroke-width="1"/><path d="M171.5 68.4 L161.9 71.9 V82.6 L171.5 79.1 Z" fill="#0f3d5e"/><path d="M161.9 71.9 V82.6" stroke="#e79c58" stroke-width="1"/></g><path d="M80.39999999999999 10.4 A5.4 5.4 0 0 1 91.2 10.4" stroke="#e79c58" stroke-width="1.5" fill="none"/><path d="M82.8 10.4 L85.8 6.6 L88.8 10.4" stroke="#e79c58" stroke-width="0.8" fill="none"/><path d="M78.8 10.6 H92.8" stroke="#e79c58" stroke-width="0.5"/><rect x="70.7" y="12.9" width="30" height="0.9" fill="#2f3f5a" opacity="0.45"/><text x="85.8" y="22.6" font-family="Liberation Serif" font-size="6" fill="#2f3f5a" text-anchor="middle" textLength="46" lengthAdjust="spacingAndGlyphs" opacity="0.85">CERTIFICATE OF</text><text x="85.8" y="30.6" font-family="Liberation Serif" font-size="6" fill="#2f3f5a" text-anchor="middle" textLength="43" lengthAdjust="spacingAndGlyphs" opacity="0.85">ACHIEVEMENT</text><rect x="62.3" y="37.4" width="47" height="0.8" fill="#2f3f5a" opacity="0.4"/><text x="85.8" y="52.4" font-family="Liberation Serif" font-style="italic" font-size="9" fill="#2f3f5a" text-anchor="middle" textLength="56" lengthAdjust="spacingAndGlyphs">[ recipient.name ]</text><rect x="27.3" y="60.6" width="118.3" height="0.9" fill="#2f3f5a" opacity="0.38"/><rect x="27.3" y="64.8" width="118.3" height="0.9" fill="#2f3f5a" opacity="0.38"/><rect x="61.5" y="69.0" width="49.7" height="0.9" fill="#2f3f5a" opacity="0.38"/><rect x="77" y="80" width="17" height="0.9" fill="#2f3f5a" opacity="0.6"/><rect x="77" y="83" width="17" height="0.5" fill="#2f3f5a" opacity="0.4"/><rect x="78" y="86.3" width="15" height="0.9" fill="#2f3f5a" opacity="0.6"/><circle cx="85.8" cy="98.7" r="9" fill="none" stroke="#e79c58" stroke-width="1.6" stroke-dasharray="1.2 0.8" opacity="0.9"/><circle cx="85.8" cy="98.7" r="6" fill="#d7a866"/><circle cx="85.8" cy="98.7" r="6.6" fill="none" stroke="#b9c2cc" stroke-width="0.5"/><text x="47" y="98.4" font-family="Liberation Serif" font-style="italic" font-size="7.5" fill="#2f3f5a" text-anchor="middle" textLength="19" lengthAdjust="spacingAndGlyphs">Scholz</text><text x="134" y="98.4" font-family="Liberation Serif" font-style="italic" font-size="7.5" fill="#2f3f5a" text-anchor="middle" textLength="19" lengthAdjust="spacingAndGlyphs">Scholz</text><rect x="32.1" y="102" width="30.8" height="0.5" fill="#2f3f5a" opacity="0.35"/><rect x="108.4" y="102" width="30.8" height="0.5" fill="#2f3f5a" opacity="0.35"/><rect x="41" y="105.3" width="12" height="0.9" fill="#2f3f5a" opacity="0.6"/><rect x="40" y="108.1" width="14" height="0.6" fill="#2f3f5a" opacity="0.35"/><rect x="128" y="105.3" width="12" height="0.9" fill="#2f3f5a" opacity="0.6"/><rect x="125" y="108.1" width="18" height="0.6" fill="#2f3f5a" opacity="0.35"/><rect x="71.4" y="112.3" width="39" height="1" fill="#2f3f5a" opacity="0.7"/><rect x="75" y="118.6" width="30" height="0.6" fill="#2f3f5a" opacity="0.4"/></svg>
<svg class="abs" style="left:540px;top:753.6px" width="171.5" height="122" viewBox="0 0 171.5 122"><defs><clipPath id="c540753"><rect x="0" y="0" width="171.5" height="122" rx="7"/></clipPath></defs><g clip-path="url(#c540753)"><rect x="0" y="0" width="171.5" height="122" fill="#fff"/><path d="M3.6 25 V98 M167.9 25 V98" stroke="#d9a466" stroke-width="0.5" opacity="0.6"/><g transform=""><path d="M0 0 H50.5 L45 4.6 H10.4 V24.6 L0 27 Z" fill="#b9895a"/><path d="M50.5 0 L45 4.6 H10.4 V24.6 L0 27" fill="none" stroke="#d9a466" stroke-width="1.1"/><g fill="#000" opacity="0.35"><circle cx="4" cy="11" r="0.5"/><circle cx="6.5" cy="11" r="0.5"/><circle cx="4" cy="14" r="0.5"/><circle cx="6.5" cy="14" r="0.5"/><circle cx="4" cy="17" r="0.5"/><circle cx="6.5" cy="17" r="0.5"/></g></g><g transform="translate(171.5,0) scale(-1,1)"><path d="M0 0 H50.5 L45 4.6 H10.4 V24.6 L0 27 Z" fill="#b9895a"/><path d="M50.5 0 L45 4.6 H10.4 V24.6 L0 27" fill="none" stroke="#d9a466" stroke-width="1.1"/><g fill="#000" opacity="0.35"><circle cx="4" cy="11" r="0.5"/><circle cx="6.5" cy="11" r="0.5"/><circle cx="4" cy="14" r="0.5"/><circle cx="6.5" cy="14" r="0.5"/><circle cx="4" cy="17" r="0.5"/><circle cx="6.5" cy="17" r="0.5"/></g></g><g transform="translate(0,122) scale(1,-1)"><path d="M0 0 H50.5 L45 4.6 H10.4 V24.6 L0 27 Z" fill="#b9895a"/><path d="M50.5 0 L45 4.6 H10.4 V24.6 L0 27" fill="none" stroke="#d9a466" stroke-width="1.1"/><g fill="#000" opacity="0.35"><circle cx="4" cy="11" r="0.5"/><circle cx="6.5" cy="11" r="0.5"/><circle cx="4" cy="14" r="0.5"/><circle cx="6.5" cy="14" r="0.5"/><circle cx="4" cy="17" r="0.5"/><circle cx="6.5" cy="17" r="0.5"/></g></g><g transform="translate(171.5,122) scale(-1,-1)"><path d="M0 0 H50.5 L45 4.6 H10.4 V24.6 L0 27 Z" fill="#b9895a"/><path d="M50.5 0 L45 4.6 H10.4 V24.6 L0 27" fill="none" stroke="#d9a466" stroke-width="1.1"/><g fill="#000" opacity="0.35"><circle cx="4" cy="11" r="0.5"/><circle cx="6.5" cy="11" r="0.5"/><circle cx="4" cy="14" r="0.5"/><circle cx="6.5" cy="14" r="0.5"/><circle cx="4" cy="17" r="0.5"/><circle cx="6.5" cy="17" r="0.5"/></g></g><path d="M0 42.6 L9.6 46.1 V56 L0 52.5 Z" fill="#b9895a"/><path d="M9.6 46.1 V56" stroke="#d9a466" stroke-width="1"/><path d="M171.5 42.6 L161.9 46.1 V56 L171.5 52.5 Z" fill="#b9895a"/><path d="M161.9 46.1 V56" stroke="#d9a466" stroke-width="1"/><path d="M0 68.4 L9.6 71.9 V82.6 L0 79.1 Z" fill="#b9895a"/><path d="M9.6 71.9 V82.6" stroke="#d9a466" stroke-width="1"/><path d="M171.5 68.4 L161.9 71.9 V82.6 L171.5 79.1 Z" fill="#b9895a"/><path d="M161.9 71.9 V82.6" stroke="#d9a466" stroke-width="1"/></g><path d="M80.39999999999999 10.4 A5.4 5.4 0 0 1 91.2 10.4" stroke="#d9a466" stroke-width="1.5" fill="none"/><path d="M82.8 10.4 L85.8 6.6 L88.8 10.4" stroke="#d9a466" stroke-width="0.8" fill="none"/><path d="M78.8 10.6 H92.8" stroke="#d9a466" stroke-width="0.5"/><rect x="70.7" y="12.9" width="30" height="0.9" fill="#3a3a3a" opacity="0.45"/><text x="85.8" y="22.6" font-family="Liberation Serif" font-size="6" fill="#3a3a3a" text-anchor="middle" textLength="46" lengthAdjust="spacingAndGlyphs" opacity="0.85">CERTIFICATE OF</text><text x="85.8" y="30.6" font-family="Liberation Serif" font-size="6" fill="#3a3a3a" text-anchor="middle" textLength="43" lengthAdjust="spacingAndGlyphs" opacity="0.85">ACHIEVEMENT</text><rect x="62.3" y="37.4" width="47" height="0.8" fill="#3a3a3a" opacity="0.4"/><text x="85.8" y="52.4" font-family="Liberation Serif" font-style="italic" font-size="9" fill="#3a3a3a" text-anchor="middle" textLength="56" lengthAdjust="spacingAndGlyphs">[ recipient.name ]</text><rect x="27.3" y="60.6" width="118.3" height="0.9" fill="#3a3a3a" opacity="0.38"/><rect x="27.3" y="64.8" width="118.3" height="0.9" fill="#3a3a3a" opacity="0.38"/><rect x="61.5" y="69.0" width="49.7" height="0.9" fill="#3a3a3a" opacity="0.38"/><rect x="77" y="80" width="17" height="0.9" fill="#3a3a3a" opacity="0.6"/><rect x="77" y="83" width="17" height="0.5" fill="#3a3a3a" opacity="0.4"/><rect x="78" y="86.3" width="15" height="0.9" fill="#3a3a3a" opacity="0.6"/><circle cx="85.8" cy="98.7" r="9" fill="none" stroke="#d9a466" stroke-width="1.6" stroke-dasharray="1.2 0.8" opacity="0.9"/><circle cx="85.8" cy="98.7" r="6" fill="#d7a866"/><circle cx="85.8" cy="98.7" r="6.6" fill="none" stroke="#b9c2cc" stroke-width="0.5"/><text x="47" y="98.4" font-family="Liberation Serif" font-style="italic" font-size="7.5" fill="#3a3a3a" text-anchor="middle" textLength="19" lengthAdjust="spacingAndGlyphs">Scholz</text><text x="134" y="98.4" font-family="Liberation Serif" font-style="italic" font-size="7.5" fill="#3a3a3a" text-anchor="middle" textLength="19" lengthAdjust="spacingAndGlyphs">Scholz</text><rect x="32.1" y="102" width="30.8" height="0.5" fill="#3a3a3a" opacity="0.35"/><rect x="108.4" y="102" width="30.8" height="0.5" fill="#3a3a3a" opacity="0.35"/><rect x="41" y="105.3" width="12" height="0.9" fill="#3a3a3a" opacity="0.6"/><rect x="40" y="108.1" width="14" height="0.6" fill="#3a3a3a" opacity="0.35"/><rect x="128" y="105.3" width="12" height="0.9" fill="#3a3a3a" opacity="0.6"/><rect x="125" y="108.1" width="18" height="0.6" fill="#3a3a3a" opacity="0.35"/><rect x="71.4" y="112.3" width="39" height="1" fill="#3a3a3a" opacity="0.7"/><rect x="75" y="118.6" width="30" height="0.6" fill="#3a3a3a" opacity="0.4"/></svg>
<div class="abs" style="left:331px;top:890px;width:399px;height:7px;overflow:hidden"><div class="abs" style="left:22px;top:4px;width:30px;height:10px;background:#252859;border-radius:2px 0 0 0;clip-path:polygon(0 100%,8% 0,100% 0,100% 100%)"></div><div class="abs" style="left:166px;top:4px;width:10px;height:10px;background:#252859"></div><div class="abs" style="left:212px;top:4px;width:30px;height:10px;background:#d6ad80;clip-path:polygon(0 100%,8% 0,100% 0,100% 100%)"></div><div class="abs" style="left:357px;top:4px;width:8px;height:10px;background:#d9b894"></div></div>

</div>
</body></html>
